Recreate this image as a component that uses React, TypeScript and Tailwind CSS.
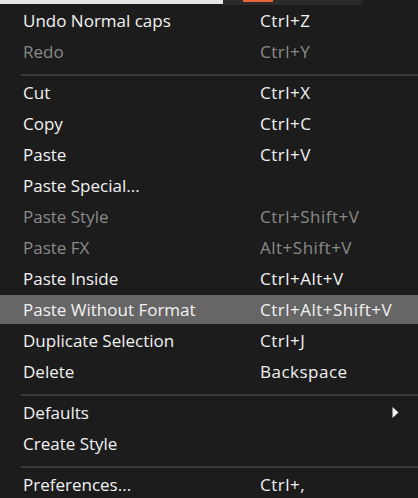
type Item = { label: string; shortcut?: string; disabled?: boolean; active?: boolean; submenu?: boolean }

const groups: Item[][] = [
  [
    { label: 'Undo Normal caps', shortcut: 'Ctrl+Z' },
    { label: 'Redo', shortcut: 'Ctrl+Y', disabled: true },
  ],
  [
    { label: 'Cut', shortcut: 'Ctrl+X' },
    { label: 'Copy', shortcut: 'Ctrl+C' },
    { label: 'Paste', shortcut: 'Ctrl+V' },
    { label: 'Paste Special...' },
    { label: 'Paste Style', shortcut: 'Ctrl+Shift+V', disabled: true },
    { label: 'Paste FX', shortcut: 'Alt+Shift+V', disabled: true },
    { label: 'Paste Inside', shortcut: 'Ctrl+Alt+V' },
    { label: 'Paste Without Format', shortcut: 'Ctrl+Alt+Shift+V', active: true },
    { label: 'Duplicate Selection', shortcut: 'Ctrl+J' },
    { label: 'Delete', shortcut: 'Backspace' },
  ],
  [
    { label: 'Defaults', submenu: true },
    { label: 'Create Style' },
  ],
  [{ label: 'Preferences...', shortcut: 'Ctrl+,' }],
]

function Row({ item }: { item: Item }) {
  return (
    <div className="h-[31px] py-[1px]">
      <div
        className={
          'h-full flex items-center pl-[23px] ' +
          (item.active ? 'bg-[#666666] ' : '') +
          (item.disabled ? 'text-[#8a8a8a]' : 'text-[#f2f2f2]')
        }
      >
        <span className="w-[237px] shrink-0 whitespace-nowrap">{item.label}</span>
        <span className="whitespace-nowrap tracking-[0.5px]">{item.shortcut}</span>
        {item.submenu && (
          <svg className="ml-auto mr-[19px]" width="7" height="11" viewBox="0 0 7 11">
            <path d="M0.5 0 L6.5 5.5 L0.5 11 Z" fill="#f2f2f2" />
          </svg>
        )}
      </div>
    </div>
  )
}

export default function App() {
  return (
    <main className="w-[418px] h-[498px] overflow-hidden bg-[#1c1c1c] font-['Open_Sans',sans-serif] text-[17px]">
      <div className="flex h-[5px]">
        <div className="w-[223px] h-[4px] bg-[#e6e6e6]" />
        <div className="w-[137px] h-[5px] bg-[#2b2b2b] relative">
          <div className="absolute left-[20px] top-0 w-[30px] h-[2px] bg-[#e8663a]" />
        </div>
        <div className="w-[3px] h-[5px] bg-[#262626]" />
      </div>
      {groups.map((g, gi) => (
        <div key={gi}>
          {gi > 0 && (
            <div className="h-[10px] pt-[7px] pl-[21px]">
              <div className="h-[2px] bg-[#3a3a3a]" />
            </div>
          )}
          {g.map((it) => (
            <Row key={it.label} item={it} />
          ))}
        </div>
      ))}
    </main>
  )
}
